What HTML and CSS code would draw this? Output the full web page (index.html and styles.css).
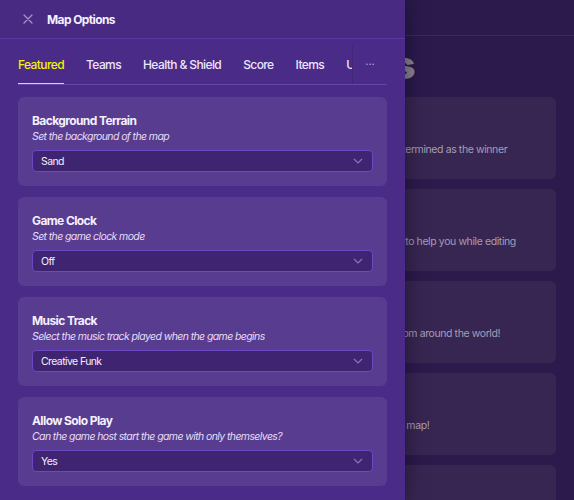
FILE: index.html
```html
<!DOCTYPE html>
<html>
<head>
<meta charset="utf-8">
<link rel="stylesheet" href="styles.css">
</head>
<body>
<div class="page">
  <div class="topbar"></div>
  <div class="page-main">
    <h1 class="page-title">Map Options</h1>
    <div class="bg-card"><div class="bg-card-title">Winning Condition</div><div class="bg-card-text">The game ends when time runs out and the player with the most score will be determined as the winner</div></div>
    <div class="bg-card"><div class="bg-card-title">Editor Grid</div><div class="bg-card-text">Show a helpful grid overlay and some snapping guides on top of your entire map to help you while editing</div></div>
    <div class="bg-card"><div class="bg-card-title">Discovery</div><div class="bg-card-text">Publish your map so that it can be found and played by all players and creators from around the world!</div></div>
    <div class="bg-card"><div class="bg-card-title">Thumbnail</div><div class="bg-card-text">Pick a thumbnail image that players will see when they browse and discover your map!</div></div>
    <div class="bg-card"><div class="bg-card-title">More</div><div class="bg-card-text">More settings</div></div>
  </div>
</div>

<aside class="drawer">
  <header class="drawer-head">
    <svg class="close" width="10" height="10" viewBox="0 0 10 10"><path d="M1 1L9 9M9 1L1 9" stroke="#a394c9" stroke-width="1.3" stroke-linecap="round"/></svg>
    <span class="drawer-title">Map Options</span>
  </header>
  <nav class="tabs">
    <div class="tab-scroll">
      <div class="tab active">Featured</div>
      <div class="tab">Teams</div>
      <div class="tab">Health &amp; Shield</div>
      <div class="tab">Score</div>
      <div class="tab">Items</div>
      <div class="tab">UI</div>
    </div>
    <div class="tab-more">···</div>
  </nav>
  <div class="options">
    <section class="opt">
      <div class="opt-title">Background Terrain</div>
      <div class="opt-desc">Set the background of the map</div>
      <div class="select"><span>Sand</span><svg class="chev" width="10" height="6" viewBox="0 0 10 6"><path d="M1 1L5 5L9 1" fill="none" stroke="#8a73bf" stroke-width="1.2"/></svg></div>
    </section>
    <section class="opt">
      <div class="opt-title">Game Clock</div>
      <div class="opt-desc">Set the game clock mode</div>
      <div class="select"><span>Off</span><svg class="chev" width="10" height="6" viewBox="0 0 10 6"><path d="M1 1L5 5L9 1" fill="none" stroke="#8a73bf" stroke-width="1.2"/></svg></div>
    </section>
    <section class="opt">
      <div class="opt-title">Music Track</div>
      <div class="opt-desc">Select the music track played when the game begins</div>
      <div class="select"><span>Creative Funk</span><svg class="chev" width="10" height="6" viewBox="0 0 10 6"><path d="M1 1L5 5L9 1" fill="none" stroke="#8a73bf" stroke-width="1.2"/></svg></div>
    </section>
    <section class="opt">
      <div class="opt-title">Allow Solo Play</div>
      <div class="opt-desc">Can the game host start the game with only themselves?</div>
      <div class="select"><span>Yes</span><svg class="chev" width="10" height="6" viewBox="0 0 10 6"><path d="M1 1L5 5L9 1" fill="none" stroke="#8a73bf" stroke-width="1.2"/></svg></div>
    </section>
  </div>
</aside>
</body>
</html>
```
FILE: styles.css
```css
* { box-sizing: border-box; }
html, body { margin: 0; height: 100%; }
body {
  background: #2b1a4b;
  font-family: Inter, "Noto Sans", sans-serif;
  overflow: hidden;
}
.page { height: 500px; overflow: hidden; }
.topbar { height: 36px; border-bottom: 1px solid #3a2664; }
.page-main { padding: 9px 18px 0 18px; }
.page-title {
  margin: 0 0 12px 0;
  font-size: 38px;
  line-height: 40px;
  font-weight: 900;
  color: #8a8791;
  padding-left: 155px;
  white-space: nowrap;
}
.bg-card {
  height: 82px;
  margin-bottom: 10px;
  background: #372651;
  border-radius: 6px;
  padding: 18px 16px;
  color: #a69db5;
  font-size: 10.5px;
  letter-spacing: -0.4px;
  white-space: nowrap;
}
.bg-card-title { font-weight: 700; font-size: 13px; margin-bottom: 12px; color: #cfc6de; }

.drawer {
  position: absolute;
  left: 0; top: 0;
  width: 405px; height: 500px;
  background: #4a2b87;
  box-shadow: 0 0 18px rgba(10, 5, 25, 0.55);
  overflow: hidden;
  display: flex;
  flex-direction: column;
}
.drawer-head {
  height: 39px;
  flex: none;
  background: #482a83;
  border-bottom: 1px solid #5a3aa4;
  display: flex;
  align-items: center;
  padding-left: 23px;
  gap: 14px;
}
.close { display: block; }
.drawer-title {
  color: #f4f0ff;
  font-weight: 700;
  font-size: 12px;
  letter-spacing: -0.6px;
}
.tabs {
  margin: 6px 18px 0 18px;
  display: flex;
  border-bottom: 1px solid #6446ad;
  height: 40px;
  flex: none;
}
.tab-scroll {
  width: 335px;
  display: flex;
  gap: 22px;
  overflow: hidden;
  border-right: 1px solid #42267a;
}
.tab {
  position: relative;
  flex: none;
  height: 39px;
  display: flex;
  align-items: center;
  color: #ece6fb;
  font-size: 12px;
  font-weight: 500;
  letter-spacing: -0.6px;
}
.tab.active { color: #f2f200; }
.tab.active::after {
  content: "";
  position: absolute;
  left: 0; right: 0; bottom: -1px;
  height: 2px;
  background: #f2f200;
}
.tab-more {
  flex: 1;
  display: flex;
  align-items: center;
  justify-content: center;
  color: #b6a8dc;
  font-size: 11px;
  padding-bottom: 1px;
}
.options {
  padding: 12px 18px 0 18px;
  display: flex;
  flex-direction: column;
  gap: 11px;
}
.opt {
  background: #583c8f;
  border-radius: 6px;
  padding: 16px 14px 14px 14px;
}
.opt-title {
  color: #f4f0ff;
  font-weight: 700;
  font-size: 12px;
  line-height: 16px;
  letter-spacing: -0.6px;
}
.opt-desc {
  color: #e4dcf6;
  font-style: italic;
  font-size: 10.5px;
  line-height: 15px;
  letter-spacing: -0.6px;
}
.select {
  margin-top: 6px;
  height: 22px;
  background: #3f2471;
  border: 1px solid #6c48c4;
  border-radius: 4px;
  display: flex;
  align-items: center;
  justify-content: space-between;
  padding: 0 9px 0 8px;
  color: #f2eefc;
  font-size: 10.5px;
  letter-spacing: -0.6px;
}
.chev { display: block; }
```
